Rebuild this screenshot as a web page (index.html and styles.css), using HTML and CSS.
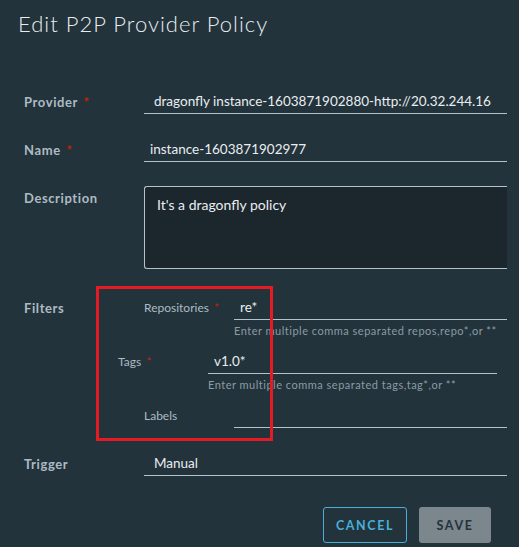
FILE: index.html
```html
<!DOCTYPE html>
<html>
<head>
<meta charset="utf-8">
<link rel="stylesheet" href="styles.css">
</head>
<body>
<div class="modal">
  <h1 class="title">Edit P2P Provider Policy</h1>
  <form class="form">
    <div class="row">
      <label class="label">Provider <span class="req">*</span></label>
      <div class="field select">dragonfly instance-1603871902880-http://20.32.244.16</div>
    </div>
    <div class="row">
      <label class="label">Name <span class="req">*</span></label>
      <div class="field">instance-1603871902977</div>
    </div>
    <div class="row">
      <label class="label">Description</label>
      <div class="textarea">It's a dragonfly policy</div>
    </div>
    <div class="row filters-row">
      <label class="label">Filters</label>
      <div class="filters">
        <div class="sub">
          <label class="sublabel">Repositories <span class="req">*</span></label>
          <div class="subfield">
            <div class="field">re*</div>
            <div class="helper">Enter multiple comma separated repos,repo*,or **</div>
          </div>
        </div>
        <div class="sub sub-tags">
          <label class="sublabel">Tags <span class="req">*</span></label>
          <div class="subfield">
            <div class="field">v1.0*</div>
            <div class="helper">Enter multiple comma separated tags,tag*,or **</div>
          </div>
        </div>
        <div class="sub sub-last">
          <label class="sublabel">Labels</label>
          <div class="subfield">
            <div class="field"></div>
          </div>
        </div>
      </div>
      <div class="highlight"></div>
    </div>
    <div class="row">
      <label class="label">Trigger</label>
      <div class="field select">Manual</div>
    </div>
    <div class="actions">
      <button type="button" class="btn btn-outline">CANCEL</button>
      <button type="button" class="btn btn-disabled">SAVE</button>
    </div>
  </form>
</div>
</body>
</html>
```

FILE: styles.css
```css
* { box-sizing: border-box; }
html, body {
  margin: 0;
  padding: 0;
  background: #22333b;
  width: 519px;
  height: 547px;
  overflow: hidden;
  font-family: "Lato", "Noto Sans", sans-serif;
}
.modal {
  padding: 9px 12px 0 24px;
}
.title {
  margin: 0 0 0 -6px;
  font-size: 22px;
  line-height: 29px;
  font-weight: 300;
  color: #e9ecef;
  letter-spacing: 1px;
}
.form {
  margin-top: 52px;
}
.row {
  display: grid;
  grid-template-columns: 120px 1fr;
  margin-bottom: 24px;
  position: relative;
}
.label {
  font-size: 13px;
  font-weight: 700;
  color: #adbbc4;
  line-height: 24px;
  letter-spacing: 0.6px;
}
.req {
  color: #c92100;
  margin-left: 2px;
}
.field {
  height: 24px;
  border-bottom: 1px solid #b5c2ca;
  color: #eaedf0;
  font-size: 13.5px;
  line-height: 23px;
  padding-left: 6px;
  white-space: nowrap;
  overflow: hidden;
}
.field.select {
  padding-left: 10px;
}
.textarea {
  height: 83px;
  background: #1b262d;
  border: 1px solid #b5c2ca;
  border-right: none;
  border-radius: 3px 0 0 3px;
  color: #eaedf0;
  font-size: 14px;
  padding: 9px 12px;
  line-height: 18px;
}
.filters-row {
  margin-top: 27px;
}
.filters {
  display: flex;
  flex-direction: column;
}
.sub {
  display: grid;
  grid-template-columns: 90px 1fr;
  height: 54px;
}
.sub-tags {
  margin-left: -26px;
  margin-right: 10px;
}
.sub-last {
  height: 24px;
}
.sublabel {
  font-size: 12px;
  color: #adbbc4;
  line-height: 24px;
}
.helper {
  font-size: 11px;
  color: #8c9ba5;
  line-height: 14px;
  margin-top: 4px;
  white-space: nowrap;
  letter-spacing: 0.5px;
}
.highlight {
  position: absolute;
  left: 72px;
  top: -10px;
  width: 177px;
  height: 155px;
  border: 3px solid #e51b24;
  pointer-events: none;
}
.actions {
  display: flex;
  justify-content: flex-end;
  gap: 12px;
  margin-top: 31px;
  padding-right: 16px;
}
.btn {
  height: 36px;
  border-radius: 3px;
  font-family: inherit;
  font-size: 12.5px;
  font-weight: 700;
  letter-spacing: 1.6px;
  padding: 0;
}
.btn-outline {
  width: 84px;
  background: transparent;
  border: 1px solid #49afd9;
  color: #49afd9;
}
.btn-disabled {
  width: 72px;
  background: #7b878c;
  border: none;
  color: #22333b;
}
```
